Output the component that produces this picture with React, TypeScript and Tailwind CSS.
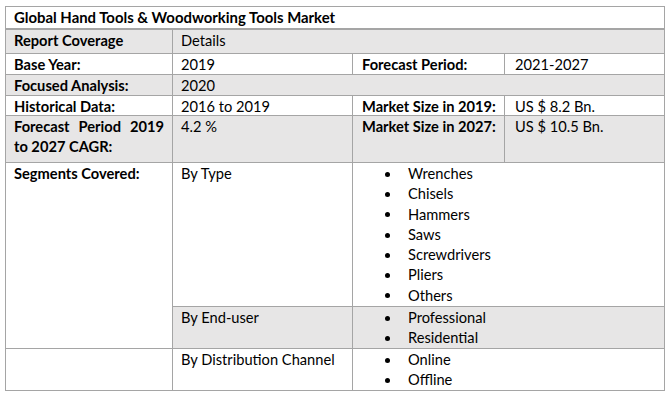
import React from 'react';

const gray = 'bg-[#e7e6e6]';
const cell = 'border-r border-b border-[#a5a5a5] pl-2 pt-[1px] leading-[20px]';

const Bullets = ({ items }: { items: string[] }) => (
  <ul>
    {items.map((item) => (
      <li key={item} className="flex items-center leading-[20.3px]">
        <span className="ml-[24px] mr-[18px] h-[5px] w-[5px] rounded-full bg-black" />
        <span>{item}</span>
      </li>
    ))}
  </ul>
);

export default function App() {
  return (
    <div className="h-[403px] w-[672px] bg-white pl-[5px] pt-[6px] text-[14.67px] text-black [font-family:Lato,'Open_Sans',sans-serif]">
      <div className="grid w-[660px] grid-cols-[167px_180px_152px_160px] grid-rows-[23px_24px_21px_21px_20px_47px_144px_42px_42px] border-l border-t border-[#a5a5a5]">
        {/* title */}
        <div className="col-span-4 border-r border-b-2 border-[#a5a5a5] pl-2 text-[14.9px] font-bold leading-[20px]">
          Global Hand Tools &amp; Woodworking Tools Market
        </div>

        <div className={`${cell} ${gray} font-bold`}>Report Coverage</div>
        <div className={`${cell} ${gray} col-span-3`}>Details</div>

        <div className={`${cell} font-bold`}>Base Year:</div>
        <div className={cell}>2019</div>
        <div className={`${cell} pl-[9px] font-bold`}>Forecast Period:</div>
        <div className={`${cell} pl-[10px]`}>2021-2027</div>

        <div className={`${cell} ${gray} font-bold`}>Focused Analysis:</div>
        <div className={`${cell} ${gray} col-span-3`}>2020</div>

        <div className={`${cell} font-bold`}>Historical Data:</div>
        <div className={cell}>2016 to 2019</div>
        <div className={`${cell} pl-[9px] font-bold`}>Market Size in 2019:</div>
        <div className={`${cell} pl-[10px]`}>US $ 8.2 Bn.</div>

        <div className={`${cell} ${gray} pr-2 font-bold`}>
          <div className="text-justify [text-align-last:justify]">Forecast Period 2019</div>
          <div>to 2027 CAGR:</div>
        </div>
        <div className={`${cell} ${gray}`}>4.2 %</div>
        <div className={`${cell} ${gray} pl-[9px] font-bold`}>Market Size in 2027:</div>
        <div className={`${cell} ${gray} pl-[10px]`}>US $ 10.5 Bn.</div>

        <div className={`${cell} row-span-2 font-bold`}>Segments Covered:</div>
        <div className={cell}>By Type</div>
        <div className={`${cell} col-span-2`}>
          <Bullets items={['Wrenches', 'Chisels', 'Hammers', 'Saws', 'Screwdrivers', 'Pliers', 'Others']} />
        </div>

        <div className={`${cell} ${gray}`}>By End-user</div>
        <div className={`${cell} ${gray} col-span-2`}>
          <Bullets items={['Professional', 'Residential']} />
        </div>

        <div className={cell} />
        <div className={cell}>By Distribution Channel</div>
        <div className={`${cell} col-span-2`}>
          <Bullets items={['Online', 'Offline']} />
        </div>
      </div>
    </div>
  );
}
